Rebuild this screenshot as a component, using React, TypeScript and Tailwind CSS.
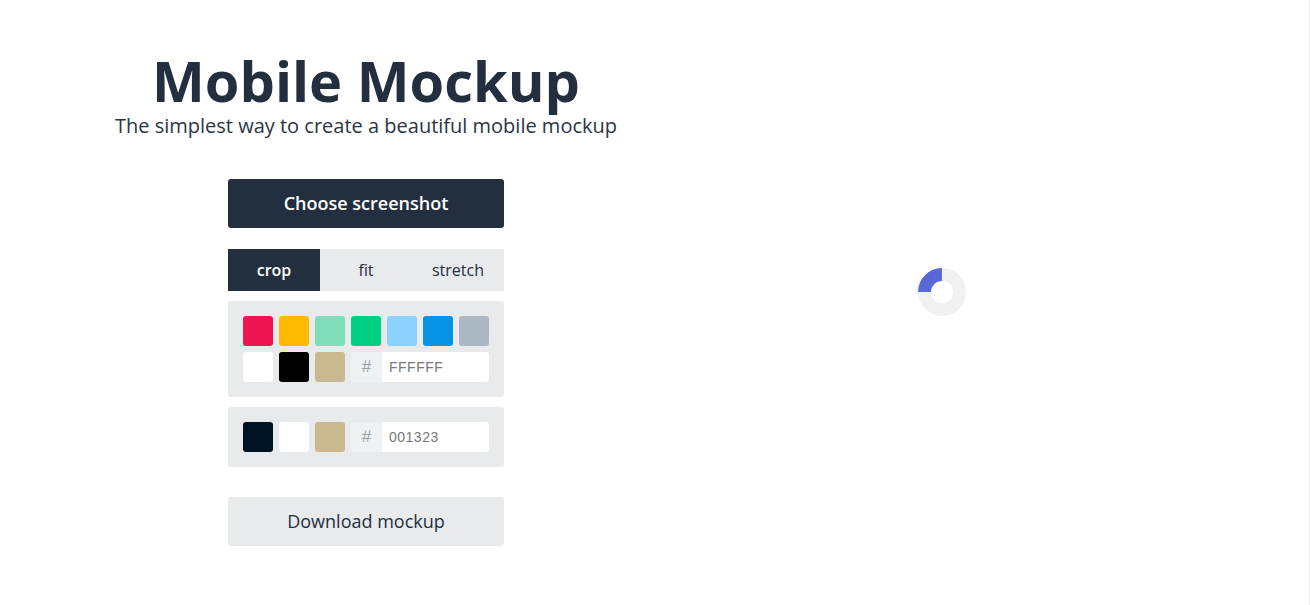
import React from 'react'

const primary = ['#ef1553', '#ffb900', '#7fdeb9', '#00d084', '#8ed1fc', '#0693e3', '#abb8c3']
const secondary = ['#ffffff', '#000000', '#c9b991']
const bgSwatches = ['#001323', '#ffffff', '#c9b991']

function Swatch({ color }: { color: string }) {
  return <div className="w-[30px] h-[30px] rounded-[3px]" style={{ backgroundColor: color }} />
}

function HexInput({ value }: { value: string }) {
  return (
    <div className="flex h-[30px] w-[138px] rounded-[3px] overflow-hidden">
      <div className="w-[31px] bg-[#f0f1f2] flex items-center justify-center text-[#9aa1a7] text-[17px] font-['Liberation_Sans',sans-serif]">
        #
      </div>
      <div className="flex-1 bg-white flex items-center pl-[7px] text-[14px] text-[#777777] font-['Liberation_Sans',sans-serif] tracking-[0.5px]">
        {value}
      </div>
    </div>
  )
}

export default function App() {
  return (
    <div className="w-[1310px] h-[605px] bg-white border-r border-[#ececec] flex font-['Open_Sans',sans-serif] text-[#232f3f]">
      {/* Left: controls */}
      <div className="w-[732px] flex flex-col items-center pt-[47px]">
        <h1 className="text-[56px] font-bold leading-[67px]">Mobile Mockup</h1>
        <p className="text-[20px] leading-[24px] text-[#2a3544]">The simplest way to create a beautiful mobile mockup</p>

        <div className="w-[276px] mt-[41px] flex flex-col">
          <button className="h-[49px] rounded-[3px] bg-[#232f3f] text-white text-[18px] font-semibold">
            Choose screenshot
          </button>

          <div className="mt-[21px] grid grid-cols-3 h-[42px] text-[16px]">
            <div className="bg-[#232f3f] text-white font-semibold flex items-center justify-center">crop</div>
            <div className="bg-[#e9eaec] font-medium flex items-center justify-center">fit</div>
            <div className="bg-[#e9eaec] font-medium flex items-center justify-center">stretch</div>
          </div>

          <div className="mt-[10px] bg-[#e9eaec] rounded-[3px] p-[15px] flex flex-col gap-[6px]">
            <div className="flex gap-[6px]">
              {primary.map((c) => (
                <Swatch key={c} color={c} />
              ))}
            </div>
            <div className="flex gap-[6px]">
              {secondary.map((c) => (
                <Swatch key={c} color={c} />
              ))}
              <HexInput value="FFFFFF" />
            </div>
          </div>

          <div className="mt-[10px] bg-[#e9eaec] rounded-[3px] p-[15px] flex gap-[6px]">
            {bgSwatches.map((c) => (
              <Swatch key={c} color={c} />
            ))}
            <HexInput value="001323" />
          </div>

          <button className="mt-[30px] h-[49px] rounded-[3px] bg-[#e9eaec] text-[#232f3f] text-[18px] font-medium">
            Download mockup
          </button>
        </div>
      </div>

      {/* Right: preview (loading) */}
      <div className="w-[420px] flex justify-center pt-[268px]">
        <div className="w-[48px] h-[48px] rounded-full border-[13px] border-[#f1f1f1] border-t-[#5a67d8] -rotate-45" />
      </div>
    </div>
  )
}
